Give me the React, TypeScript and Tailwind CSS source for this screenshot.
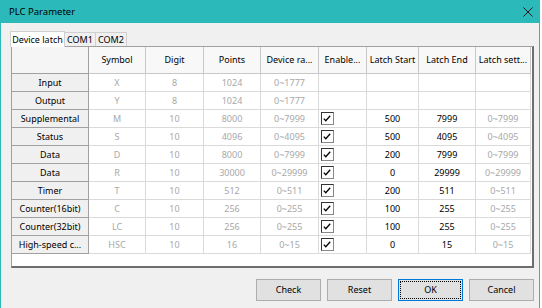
import React from "react";

const cols = [77, 57, 58, 57, 58, 48, 52, 57, 55];
const headers = ["Symbol", "Digit", "Points", "Device ra...", "Enable...", "Latch Start", "Latch End", "Latch sett..."];

type Row = { name: string; sym: string; digit: string; pts: string; range: string; en: boolean; start: string; end: string; set: string };
const rows: Row[] = [
  { name: "Input", sym: "X", digit: "8", pts: "1024", range: "0~1777", en: false, start: "", end: "", set: "" },
  { name: "Output", sym: "Y", digit: "8", pts: "1024", range: "0~1777", en: false, start: "", end: "", set: "" },
  { name: "Supplemental", sym: "M", digit: "10", pts: "8000", range: "0~7999", en: true, start: "500", end: "7999", set: "0~7999" },
  { name: "Status", sym: "S", digit: "10", pts: "4096", range: "0~4095", en: true, start: "500", end: "4095", set: "0~4095" },
  { name: "Data", sym: "D", digit: "10", pts: "8000", range: "0~7999", en: true, start: "200", end: "7999", set: "0~7999" },
  { name: "Data", sym: "R", digit: "10", pts: "30000", range: "0~29999", en: true, start: "0", end: "29999", set: "0~29999" },
  { name: "Timer", sym: "T", digit: "10", pts: "512", range: "0~511", en: true, start: "200", end: "511", set: "0~511" },
  { name: "Counter(16bit)", sym: "C", digit: "10", pts: "256", range: "0~255", en: true, start: "100", end: "255", set: "0~255" },
  { name: "Counter(32bit)", sym: "LC", digit: "10", pts: "256", range: "0~255", en: true, start: "100", end: "255", set: "0~255" },
  { name: "High-speed c...", sym: "HSC", digit: "10", pts: "16", range: "0~15", en: true, start: "0", end: "15", set: "0~15" },
];

function Check() {
  return (
    <div className="w-[13px] h-[13px] bg-white border border-[#333] border-r-[#888] border-b-[#888] flex items-end justify-start pl-[1px] pb-[2px]">
      <svg width="8" height="7" viewBox="0 0 8 7">
        <path d="M0.8 3.6 L2.8 5.8 L7.2 0.8" fill="none" stroke="#000" strokeWidth="1.3" />
      </svg>
    </div>
  );
}

function Cell({ w, children, cls = "" }: { w: number; children?: React.ReactNode; cls?: string }) {
  return (
    <div style={{ width: w }} className={"h-[18px] shrink-0 border-r border-b border-[#dadada] flex items-center justify-center " + cls}>
      {children}
    </div>
  );
}

function Btn({ label, ok }: { label: string; ok?: boolean }) {
  return (
    <div className={"w-[65px] h-[22px] flex items-center justify-center text-[9px] text-black bg-[#e1e1e1] " + (ok ? "border border-[#0078d7]" : "border border-[#adadad]")}>
      {ok ? (
        <div className="w-[61px] h-[18px] border border-dotted border-[#000] flex items-center justify-center">{label}</div>
      ) : (
        label
      )}
    </div>
  );
}

export default function App() {
  return (
    <div className="w-[542px] h-[308px] bg-white flex overflow-hidden" style={{ fontFamily: '"Noto Sans", "Open Sans", sans-serif' }}>
      <div className="w-[540px] h-[308px] bg-[#f0f0f0] border-l border-r border-[#2bb9b9] flex flex-col">
        <div className="h-[23px] bg-[#2bb9b9] flex items-center justify-between pl-[8px] pr-[4px] shrink-0">
          <span className="text-[9.5px] text-black leading-none">PLC Parameter</span>
          <svg width="10" height="10" viewBox="0 0 10 10" className="mr-[2px]">
            <path d="M0.5 0.5 L9.5 9.5 M9.5 0.5 L0.5 9.5" stroke="#1a1a1a" strokeWidth="1" />
          </svg>
        </div>
        <div className="pl-[9px] pt-[7px] flex flex-col">
          <div className="flex items-end h-[16px] text-[9px] text-black">
            <div className="h-[16px] w-[55px] bg-white border border-b-0 border-[#d0d0d0] flex items-center justify-center relative top-[1px] z-10">Device latch</div>
            <div className="h-[14px] w-[31px] border border-b-0 border-l-0 border-[#d0d0d0] flex items-center justify-center">COM1</div>
            <div className="h-[14px] w-[31px] border border-b-0 border-l-0 border-[#d0d0d0] flex items-center justify-center">COM2</div>
          </div>
          <div className="w-[523px] h-[222px] ml-[1px] bg-white border border-[#a0a0a0] border-r-[2px] border-b-[2px] border-r-[#6e6e6e] border-b-[#6e6e6e] flex flex-col text-[9px]">
            <div className="flex h-[27px]">
              <div style={{ width: cols[0] }} className="h-[27px] shrink-0 bg-[#f5f5f5] border-r border-b border-[#a0a0a0]" />
              {headers.map((h, i) => (
                <div key={i} style={{ width: cols[i + 1] }} className="h-[27px] shrink-0 bg-[#f8f8f8] border-r border-b border-[#c8c8c8] flex items-center justify-center text-black whitespace-nowrap overflow-hidden">
                  {h}
                </div>
              ))}
            </div>
            {rows.map((r, i) => (
              <div key={i} className="flex">
                <div style={{ width: cols[0] }} className="h-[18px] shrink-0 bg-[#f0f0f0] border-r border-b border-[#a0a0a0] flex items-center justify-center text-black whitespace-nowrap">
                  {r.name}
                </div>
                <Cell w={cols[1]} cls="text-[#a8a8a8]">{r.sym}</Cell>
                <Cell w={cols[2]} cls="text-[#a8a8a8]">{r.digit}</Cell>
                <Cell w={cols[3]} cls="text-[#a8a8a8]">{r.pts}</Cell>
                <Cell w={cols[4]} cls="text-[#a8a8a8]">{r.range}</Cell>
                <Cell w={cols[5]} cls="!justify-start pl-[2px]">{r.en ? <Check /> : null}</Cell>
                <Cell w={cols[6]} cls="text-black">{r.start}</Cell>
                <Cell w={cols[7]} cls="text-black">{r.end}</Cell>
                <Cell w={cols[8]} cls="text-[#a8a8a8]">{r.set}</Cell>
              </div>
            ))}
          </div>
          <div className="flex gap-[6px] pl-[246px] mt-[11px]">
            <Btn label="Check" />
            <Btn label="Reset" />
            <Btn label="OK" ok />
            <Btn label="Cancel" />
          </div>
        </div>
      </div>
    </div>
  );
}
